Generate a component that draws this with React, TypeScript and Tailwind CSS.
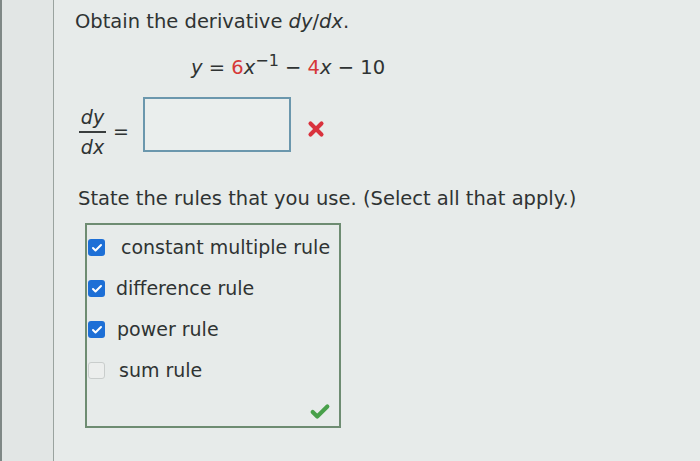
import { Check, X } from 'lucide-react';

const rules = [
  { label: 'constant multiple rule', checked: true, pad: 'pl-[16px]' },
  { label: 'difference rule', checked: true, pad: 'pl-[11px]' },
  { label: 'power rule', checked: true, pad: 'pl-[12px]' },
  { label: 'sum rule', checked: false, pad: 'pl-[14px]' },
];

function Box({ checked }: { checked: boolean }) {
  if (!checked) {
    return <span className="block w-[17px] h-[17px] rounded-[3px] border border-[#c9cdcc] bg-[#eceeed]" />;
  }
  return (
    <span className="flex items-center justify-center w-[17px] h-[17px] rounded-[3px] bg-[#1d6fd6]">
      <Check className="w-[12px] h-[12px] text-white" strokeWidth={4} />
    </span>
  );
}

export default function App() {
  return (
    <div
      className="flex w-[700px] h-[461px] bg-[#e7ebea] text-[#2f3333] overflow-hidden"
      style={{ fontFamily: '"DejaVu Sans", Verdana, sans-serif' }}
    >
      <div className="w-[54px] shrink-0 border-r border-[#9aa39f] border-l-[2px] border-l-[#7f8886] bg-[#e2e6e5]" />
      <div className="flex-1 flex flex-col pl-[21px] pt-[10px]">
        <p className="text-[19.5px] leading-[24px]">
          Obtain the derivative <i>dy</i>/<i>dx</i>.
        </p>
        <p className="pl-[116px] mt-[22px] text-[19.5px] leading-[24px]">
          <i>y</i> = <span className="text-[#d63838]">6</span>
          <i>x</i>
          <sup className="text-[16px] relative -top-[8px]">−1</sup> − <span className="text-[#d63838]">4</span>
          <i>x</i> − 10
        </p>
        <div className="flex items-start mt-[17px] pl-[4px]">
          <div className="flex flex-col items-center text-[19px] italic leading-[20px] mt-[10px]">
            <span className="px-[1px]">dy</span>
            <span className="block w-[27px] h-[2px] bg-[#3a3e3e] my-[4px]" />
            <span>dx</span>
          </div>
          <span className="ml-[7px] mt-[22px] text-[19px] leading-[24px]">=</span>
          <div className="ml-[14px] w-[148px] h-[55px] border-[2px] border-[#6b97ad] bg-[#eaeeed]" />
          <X className="ml-[14px] mt-[21px] w-[22px] h-[22px] text-[#d9323d]" strokeWidth={4.5} />
        </div>
        <p className="mt-[30px] pl-[3px] text-[19.5px] leading-[24px]">
          State the rules that you use. (Select all that apply.)
        </p>
        <div className="mt-[12px] ml-[10px] w-[256px] h-[205px] border-[2px] border-[#6e8c72] flex flex-col pt-[2px] pl-[1px]">
          {rules.map((r) => (
            <div key={r.label} className="flex items-center h-[41px]">
              <Box checked={r.checked} />
              <span className={`${r.pad} text-[19px]`}>{r.label}</span>
            </div>
          ))}
          <div className="flex justify-end pr-[8px] mt-[10px]">
            <Check className="w-[22px] h-[22px] text-[#48a04a]" strokeWidth={4.5} />
          </div>
        </div>
      </div>
    </div>
  );
}
